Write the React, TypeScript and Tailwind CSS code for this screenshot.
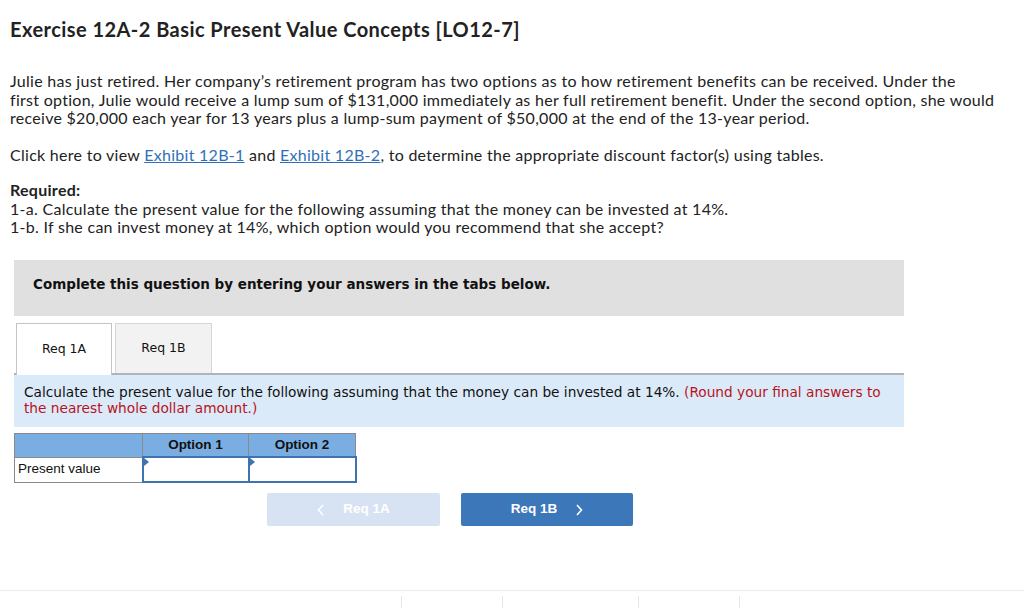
import React from 'react';

const body = { fontFamily: 'Lato, "Open Sans", sans-serif' };
const verdana = { fontFamily: '"DejaVu Sans", Verdana, sans-serif' };
const arial = { fontFamily: '"Liberation Sans", Arial, sans-serif' };

function AnswerCell() {
  return (
    <td className="relative border-2 border-[#3f73b0] bg-white p-0">
      <span className="absolute left-0 top-0 h-0 w-0 border-y-[4px] border-l-[5px] border-y-transparent border-l-[#3f73b0]" />
      <input className="h-[20px] w-full outline-none" />
    </td>
  );
}

export default function App() {
  return (
    <div className="relative h-[608px] w-[1024px] overflow-hidden bg-white text-[#222]">
      <div className="px-[10px] pt-[17px]" style={body}>
        <h1 className="text-[20px] font-bold leading-[24px] tracking-[0.45px] text-[#222]">
          Exercise 12A-2 Basic Present Value Concepts [LO12-7]
        </h1>

        <div className="text-[16px] leading-[18.5px] tracking-[0.28px]">
          <p className="mt-[31px]">
            Julie has just retired. Her company’s retirement program has two options as to how retirement benefits can be received. Under the
            <br />
            first option, Julie would receive a lump sum of $131,000 immediately as her full retirement benefit. Under the second option, she would
            <br />
            receive $20,000 each year for 13 years plus a lump-sum payment of $50,000 at the end of the 13-year period.
          </p>

          <p className="mt-[18px]">
            Click here to view <a className="text-[#2f6fb8] underline">Exhibit 12B-1</a> and{' '}
            <a className="text-[#2f6fb8] underline">Exhibit 12B-2</a>, to determine the appropriate discount factor(s) using
            tables.
          </p>

          <div className="mt-[17px]">
            <div className="font-bold">Required:</div>
            <div>1-a. Calculate the present value for the following assuming that the money can be invested at 14%.</div>
            <div>1-b. If she can invest money at 14%, which option would you recommend that she accept?</div>
          </div>
        </div>
      </div>

      <div className="ml-[14px] mt-[23px] w-[890px]">
        <div className="h-[56px] bg-[#e0e0e0] pl-[19px] pt-[14px] text-[13.5px] font-bold text-[#111]" style={verdana}>
          Complete this question by entering your answers in the tabs below.
        </div>

        <div className="mt-[7px] flex items-end border-b-2 border-[#b3b3b3] pl-[2px]" style={verdana}>
          <div className="-mb-[2px] flex h-[52px] w-[96px] items-center justify-center border border-b-0 border-[#c4c4c4] bg-white text-[12.5px] text-[#111]">
            Req 1A
          </div>
          <div className="ml-[3px] flex h-[50px] w-[97px] items-center justify-center border border-b-0 border-[#d6d6d6] bg-[#f2f2f2] text-[12.5px] text-[#111]">
            Req 1B
          </div>
        </div>

        <div className="bg-[#dbeaf8] px-[10px] pb-[11px] pt-[9px] text-[13.7px] leading-[16px] text-[#111]" style={verdana}>
          Calculate the present value for the following assuming that the money can be invested at 14%.{' '}
          <span className="text-[#b8131b]">(Round your final answers to the nearest whole dollar amount.)</span>
        </div>

        <table className="mt-[6px] border-collapse text-[13.5px]" style={arial}>
          <thead>
            <tr className="h-[24px] bg-[#7aaee2]">
              <th className="w-[128px] border border-[#8a8a8a]" />
              <th className="w-[106px] border border-[#8a8a8a] text-[13.5px] font-bold text-[#111]">Option 1</th>
              <th className="w-[107px] border border-[#8a8a8a] text-[13.5px] font-bold text-[#111]">Option 2</th>
            </tr>
          </thead>
          <tbody>
            <tr className="h-[25px]">
              <td className="border border-[#8a8a8a] pl-[3px] text-[#111]">Present value</td>
              <AnswerCell />
              <AnswerCell />
            </tr>
          </tbody>
        </table>

        <div className="ml-[253px] mt-[10px] flex gap-[21px]" style={arial}>
          <button className="flex h-[33px] w-[173px] items-center justify-center gap-[18px] rounded-[2px] bg-[#d7e3f2] text-[13.5px] font-bold text-white">
            <svg width="8" height="12" viewBox="0 0 8 12" fill="none" stroke="currentColor" strokeWidth="1.6">
              <path d="M6 1 1.5 6 6 11" />
            </svg>
            Req 1A
          </button>
          <button className="flex h-[33px] w-[172px] items-center justify-center gap-[18px] rounded-[2px] bg-[#3b77b9] text-[13.5px] font-bold text-white">
            Req 1B
            <svg width="8" height="12" viewBox="0 0 8 12" fill="none" stroke="currentColor" strokeWidth="1.6">
              <path d="M2 1 6.5 6 2 11" />
            </svg>
          </button>
        </div>
      </div>

      <div className="absolute bottom-0 left-0 h-[18px] w-full border-t border-[#ececec]">
        <div className="ml-[401px] mt-[5px] flex h-[12px]">
          <span className="w-[101px] border-l border-[#e6e6e6]" />
          <span className="w-[136px] border-l border-[#e6e6e6]" />
          <span className="w-[101px] border-l border-[#e6e6e6]" />
          <span className="border-l border-[#e6e6e6]" />
        </div>
      </div>
    </div>
  );
}
